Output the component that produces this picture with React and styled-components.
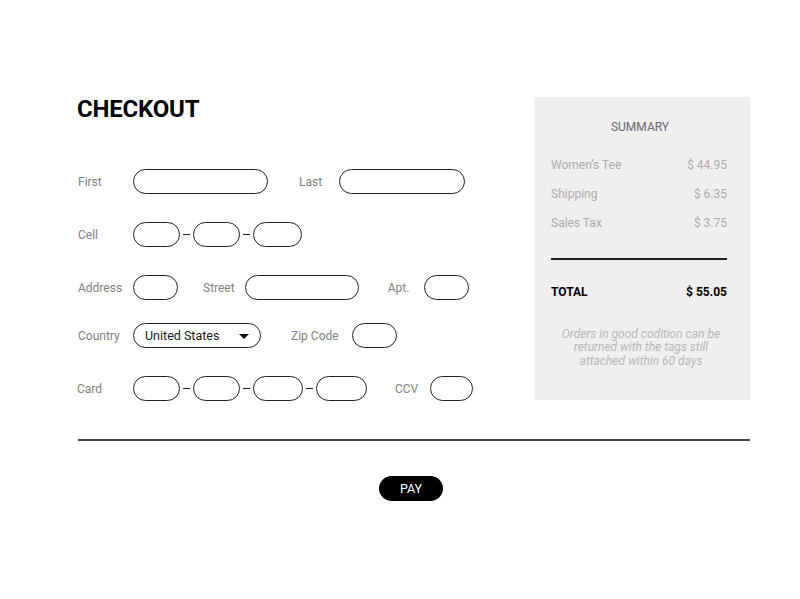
import React from "react";
import styled, { createGlobalStyle } from "styled-components";

const Global = createGlobalStyle`
  html, body { margin: 0; padding: 0; background: #fff; }
  body { font-family: Roboto, "Liberation Sans", Arial, sans-serif; }
  * { box-sizing: border-box; }
`;

const Page = styled.div`
  width: 800px;
  height: 599px;
  padding: 95px 50px 0 77px;
`;

const Top = styled.div`
  display: flex;
  justify-content: space-between;
  align-items: flex-start;
`;

const Form = styled.div`
  display: flex;
  flex-direction: column;
`;

const Title = styled.h1`
  margin: 0 0 46px;
  font-size: 24px;
  line-height: 28px;
  font-weight: 700;
  color: #000;
  letter-spacing: -0.2px;
`;

const Row = styled.div`
  display: flex;
  align-items: center;
  height: 25px;
  margin-top: ${(p) => p.$mt || 0}px;
`;

const Label = styled.span`
  font-size: 12px;
  color: #828282;
  margin-left: ${(p) => p.$ml || 0}px;
  margin-right: ${(p) => p.$mr || 0}px;
  width: ${(p) => (p.$w ? `${p.$w}px` : "auto")};
  flex: none;
  white-space: nowrap;
`;

const Field = styled.div`
  width: ${(p) => p.$w}px;
  height: 25px;
  border: 1.6px solid #222;
  border-radius: 13px;
  flex: none;
`;

const Dash = styled.span`
  width: 7px;
  height: 1.6px;
  background: #222;
  margin: 0 3px;
  flex: none;
`;

const Select = styled.div`
  width: 128px;
  height: 25px;
  border: 1.6px solid #222;
  border-radius: 13px;
  display: flex;
  align-items: center;
  justify-content: space-between;
  padding: 0 11px 0 11px;
  font-size: 12.5px;
  color: #1a1a1a;
  flex: none;
`;

const Caret = styled.span`
  width: 0;
  height: 0;
  border-left: 5.5px solid transparent;
  border-right: 5.5px solid transparent;
  border-top: 5px solid #111;
  margin-top: 1px;
`;

const Summary = styled.aside`
  width: 216px;
  height: 303px;
  margin-top: 2px;
  background: #f0eeef;
  padding: 23px 23px 0 17px;
  display: flex;
  flex-direction: column;
`;

const SummaryTitle = styled.div`
  text-align: center;
  font-size: 12px;
  color: #6a6a70;
  line-height: 14px;
  margin-left: 2px;
  margin-bottom: 24px;
`;

const Line = styled.div`
  display: flex;
  justify-content: space-between;
  font-size: 12px;
  line-height: 14px;
  color: ${(p) => (p.$strong ? "#000" : "#adadad")};
  font-weight: ${(p) => (p.$strong ? 700 : 400)};
  margin-bottom: ${(p) => p.$mb || 0}px;
`;

const Rule = styled.div`
  height: 1.5px;
  background: #222;
  margin: 28px 0 25px;
`;

const Note = styled.p`
  margin: 29px 0 0;
  text-align: center;
  font-style: italic;
  font-size: 12px;
  line-height: 13.5px;
  color: #b8b8b8;
  padding: 0 4px 0 8px;
`;

const Divider = styled.div`
  height: 1.5px;
  background: #444;
  margin: 38px 0 0 1px;
  width: 672px;
`;

const PayRow = styled.div`
  display: flex;
  padding-left: 302px;
  margin-top: 35px;
`;

const PayButton = styled.button`
  width: 64px;
  height: 25px;
  border: none;
  border-radius: 13px;
  background: #000;
  color: #fff;
  font-family: inherit;
  font-size: 12.5px;
  padding: 0;
  cursor: pointer;
`;

const Segments = ({ widths }) =>
  widths.map((w, i) => (
    <React.Fragment key={i}>
      {i > 0 && <Dash />}
      <Field $w={w} />
    </React.Fragment>
  ));

export default function App() {
  return (
    <Page>
      <Global />
      <Top>
        <Form>
          <Title>CHECKOUT</Title>
          <Row>
            <Label $ml={1} $w={55}>First</Label>
            <Field $w={135} />
            <Label $ml={31} $mr={17}>Last</Label>
            <Field $w={126} />
          </Row>
          <Row $mt={28}>
            <Label $ml={1} $w={55}>Cell</Label>
            <Segments widths={[47, 47, 49]} />
          </Row>
          <Row $mt={28}>
            <Label $ml={1} $w={55}>Address</Label>
            <Field $w={45} />
            <Label $ml={25} $mr={10}>Street</Label>
            <Field $w={114} />
            <Label $ml={29} $mr={15}>Apt.</Label>
            <Field $w={45} />
          </Row>
          <Row $mt={23}>
            <Label $ml={1} $w={55}>Country</Label>
            <Select>
              <span>United States</span>
              <Caret />
            </Select>
            <Label $ml={30} $mr={13}>Zip Code</Label>
            <Field $w={45} />
          </Row>
          <Row $mt={28}>
            <Label $w={56}>Card</Label>
            <Segments widths={[47, 47, 50, 51]} />
            <Label $ml={28} $mr={12}>CCV</Label>
            <Field $w={43} />
          </Row>
        </Form>
        <Summary>
          <SummaryTitle>SUMMARY</SummaryTitle>
          <Line $mb={15}>
            <span>Women’s Tee</span>
            <span>$ 44.95</span>
          </Line>
          <Line $mb={15}>
            <span>Shipping</span>
            <span>$ 6.35</span>
          </Line>
          <Line>
            <span>Sales Tax</span>
            <span>$ 3.75</span>
          </Line>
          <Rule />
          <Line $strong>
            <span>TOTAL</span>
            <span>$ 55.05</span>
          </Line>
          <Note>
            Orders in good codition can be returned with the tags still attached
            within 60 days
          </Note>
        </Summary>
      </Top>
      <Divider />
      <PayRow>
        <PayButton>PAY</PayButton>
      </PayRow>
    </Page>
  );
}
